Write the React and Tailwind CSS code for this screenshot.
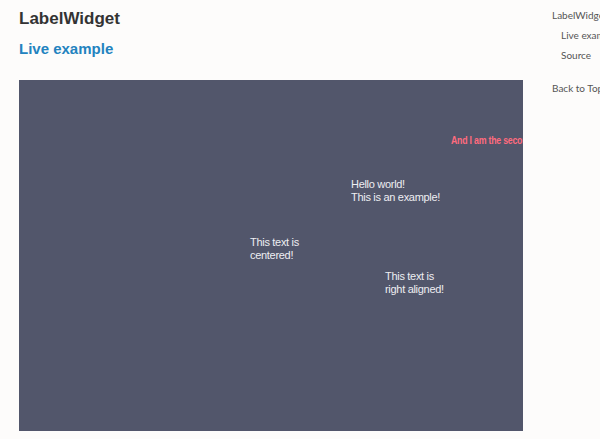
const Label = ({ className, children }) => (
  <div className={`absolute whitespace-pre leading-[13px] text-[11px] tracking-[-0.3px] ${className}`}>
    {children}
  </div>
);

const App = () => {
  return (
    <div className="flex w-[600px] h-[439px] overflow-hidden bg-[#fdfcfb]">
      <main className="w-[552px] shrink-0 pl-[19px] pt-[9px]" style={{ fontFamily: '"Liberation Sans", Arial, sans-serif' }}>
        <h1 className="text-[17px] leading-5 font-bold text-[#333333]">LabelWidget</h1>
        <h2 className="mt-[10px] text-[15px] leading-5 font-bold text-[#2383bf]">Live example</h2>
        <div className="relative mt-[21px] w-[504px] h-[351px] overflow-hidden bg-[#52566b] text-[#eeeef2]">
          <Label className="left-[432px] top-[54px] text-[9px] font-bold text-[#ff6b7e] tracking-[-0.2px] origin-left scale-x-[0.8]">
            And I am the second label!
          </Label>
          <Label className="left-[332px] top-[98px]">{"Hello world!\nThis is an example!"}</Label>
          <Label className="left-[231px] top-[156px]">{"This text is\ncentered!"}</Label>
          <Label className="left-[366px] top-[190px]">{"This text is\nright aligned!"}</Label>
        </div>
      </main>
      <nav className="pt-[5px] text-[10px] text-[#555555] whitespace-nowrap" style={{ fontFamily: 'Lato, "Open Sans", sans-serif' }}>
        <div className="leading-5">LabelWidget</div>
        <div className="pl-[9px] leading-5">Live example</div>
        <div className="pl-[9px] leading-5">Source</div>
        <div className="mt-[13px] leading-5">Back to Top</div>
      </nav>
    </div>
  );
};

export default App;
